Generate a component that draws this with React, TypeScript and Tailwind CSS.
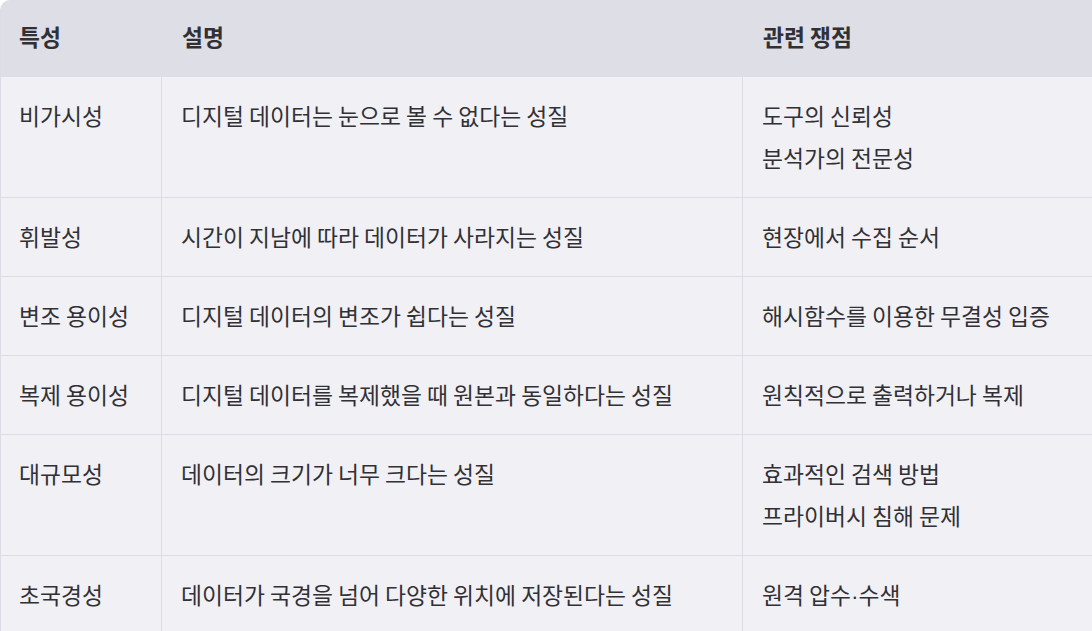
import React from "react";

const rows: { a: string; b: string; c: React.ReactNode[] }[] = [
  { a: "비가시성", b: "디지털 데이터는 눈으로 볼 수 없다는 성질", c: ["도구의 신뢰성", "분석가의 전문성"] },
  { a: "휘발성", b: "시간이 지남에 따라 데이터가 사라지는 성질", c: ["현장에서 수집 순서"] },
  { a: "변조 용이성", b: "디지털 데이터의 변조가 쉽다는 성질", c: ["해시함수를 이용한 무결성 입증"] },
  { a: "복제 용이성", b: "디지털 데이터를 복제했을 때 원본과 동일하다는 성질", c: ["원칙적으로 출력하거나 복제"] },
  { a: "대규모성", b: "데이터의 크기가 너무 크다는 성질", c: ["효과적인 검색 방법", "프라이버시 침해 문제"] },
  {
    a: "초국경성",
    b: "데이터가 국경을 넘어 다양한 위치에 저장된다는 성질",
    c: [
      <>
        원격 압수<span className="font-['Liberation_Sans']">·</span>수색
      </>,
    ],
  },
];

export default function App() {
  return (
    <div
      className="w-[1092px] h-[631px] overflow-hidden bg-white"
      style={{ fontFamily: '"Noto Sans CJK KR", "Noto Sans", sans-serif' }}
    >
      <div className="rounded-tl-[10px] overflow-hidden border-l border-[#dcdce4] bg-[#f0f0f5] text-[#303035] text-[22.8px]">
        <div className="grid grid-cols-[160px_581px_1fr] bg-[#dedee7] h-[77px] items-center font-bold leading-[28px] pb-[3px]">
          <div className="pl-[18px]">특성</div>
          <div className="pl-[21px]">설명</div>
          <div className="pl-[21px]">관련 쟁점</div>
        </div>
        {rows.map((r, i) => (
          <div
            key={i}
            className="grid grid-cols-[161px_581px_1fr] border-b border-[#dcdce4] leading-[28px]"
          >
            <div className="pl-[18px] pt-[25px] pb-[25px] border-r border-[#dcdce4]">{r.a}</div>
            <div className="pl-[19px] pt-[25px] pb-[25px] border-r border-[#dcdce4]">{r.b}</div>
            <div className="pl-[19px] pt-[25px] pb-[25px] flex flex-col gap-[14px]">
              {r.c.map((t, j) => (
                <div key={j}>{t}</div>
              ))}
            </div>
          </div>
        ))}
      </div>
    </div>
  );
}
